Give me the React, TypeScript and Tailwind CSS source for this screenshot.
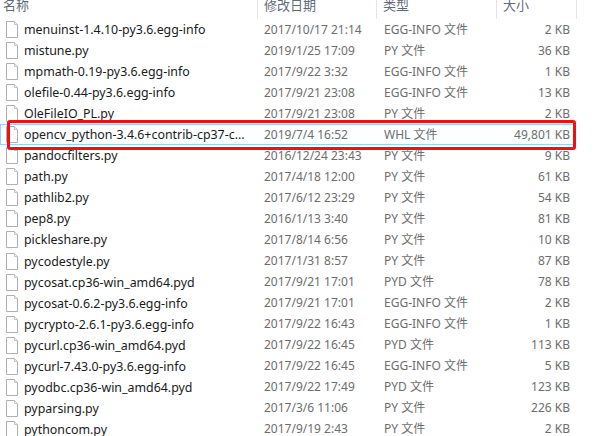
import React from 'react';

const files = [
  { name: 'menuinst-1.4.10-py3.6.egg-info', date: '2017/10/17 21:14', type: 'EGG-INFO 文件', size: '2 KB' },
  { name: 'mistune.py', date: '2019/1/25 17:09', type: 'PY 文件', size: '36 KB' },
  { name: 'mpmath-0.19-py3.6.egg-info', date: '2017/9/22 3:32', type: 'EGG-INFO 文件', size: '1 KB' },
  { name: 'olefile-0.44-py3.6.egg-info', date: '2017/9/21 23:08', type: 'EGG-INFO 文件', size: '13 KB' },
  { name: 'OleFileIO_PL.py', date: '2017/9/21 23:08', type: 'PY 文件', size: '2 KB' },
  { name: 'opencv_python-3.4.6+contrib-cp37-c...', date: '2019/7/4 16:52', type: 'WHL 文件', size: '49,801 KB', selected: true },
  { name: 'pandocfilters.py', date: '2016/12/24 23:43', type: 'PY 文件', size: '9 KB' },
  { name: 'path.py', date: '2017/4/18 12:00', type: 'PY 文件', size: '61 KB' },
  { name: 'pathlib2.py', date: '2017/6/12 23:29', type: 'PY 文件', size: '54 KB' },
  { name: 'pep8.py', date: '2016/1/13 3:40', type: 'PY 文件', size: '81 KB' },
  { name: 'pickleshare.py', date: '2017/8/14 6:56', type: 'PY 文件', size: '10 KB' },
  { name: 'pycodestyle.py', date: '2017/1/31 8:57', type: 'PY 文件', size: '87 KB' },
  { name: 'pycosat.cp36-win_amd64.pyd', date: '2017/9/21 17:01', type: 'PYD 文件', size: '78 KB' },
  { name: 'pycosat-0.6.2-py3.6.egg-info', date: '2017/9/21 17:01', type: 'EGG-INFO 文件', size: '2 KB' },
  { name: 'pycrypto-2.6.1-py3.6.egg-info', date: '2017/9/22 16:43', type: 'EGG-INFO 文件', size: '1 KB' },
  { name: 'pycurl.cp36-win_amd64.pyd', date: '2017/9/22 16:45', type: 'PYD 文件', size: '113 KB' },
  { name: 'pycurl-7.43.0-py3.6.egg-info', date: '2017/9/22 16:45', type: 'EGG-INFO 文件', size: '5 KB' },
  { name: 'pyodbc.cp36-win_amd64.pyd', date: '2017/9/22 17:49', type: 'PYD 文件', size: '123 KB' },
  { name: 'pyparsing.py', date: '2017/3/6 11:06', type: 'PY 文件', size: '226 KB' },
  { name: 'pythoncom.py', date: '2017/9/19 2:43', type: 'PY 文件', size: '2 KB' },
];

const FileIcon = () => (
  <svg width="12" height="17" viewBox="0 0 12 17" className="shrink-0">
    <path d="M0.5 0.5H8.5L11.5 3.5V16.5H0.5Z" fill="#ffffff" stroke="#b0b0b0" />
    <path d="M8.5 0.5V3.5H11.5" fill="#f0f0f0" stroke="#c4c4c4" />
  </svg>
);

const App = () => {
  return (
    <div className="relative w-[600px] h-[436px] overflow-hidden bg-white text-[12px] font-['Noto_Sans','Noto_Sans_CJK_SC',sans-serif]">
      {/* Header */}
      <div className="flex h-[19px] text-[#5f6b7a] text-[13px] leading-[10px]">
        <div className="w-[258px] pl-[3px] border-r border-[#e5e5e5]">名称</div>
        <div className="w-[119px] pl-[6px] border-r border-[#e5e5e5]">修改日期</div>
        <div className="w-[120px] pl-[6px] border-r border-[#e5e5e5]">类型</div>
        <div className="w-[80px] pl-[6px] border-r border-[#e5e5e5]">大小</div>
      </div>

      {/* Rows */}
      <div className="flex flex-col">
        {files.map((f, i) => (
          <div
            key={i}
            className={`flex items-center h-[21.05px] w-[574px] border ${
              f.selected ? 'border-[#99d1ff] bg-[#fcfeff]' : 'border-transparent'
            }`}
          >
            <div className="w-[257px] pl-[5px] flex items-center gap-[6px] text-[12.4px] leading-[18px] text-[#1a1a1a] whitespace-nowrap">
              <FileIcon />
              <span className="pt-px">{f.name}</span>
            </div>
            <div className="w-[120px] pl-[6px] text-[#6d6d6d] whitespace-nowrap">{f.date}</div>
            <div className="w-[110px] pl-[6px] text-[#6d6d6d] whitespace-nowrap">{f.type}</div>
            <div className="w-[85px] text-right pr-[3px] text-[#6d6d6d] whitespace-nowrap">{f.size}</div>
          </div>
        ))}
      </div>

      {/* Red annotation box */}
      <div className="absolute left-[7px] top-[119.5px] w-[569px] h-[30px] border-[3.5px] border-[#f01010] rounded-[3px]" />
    </div>
  );
};

export default App;
